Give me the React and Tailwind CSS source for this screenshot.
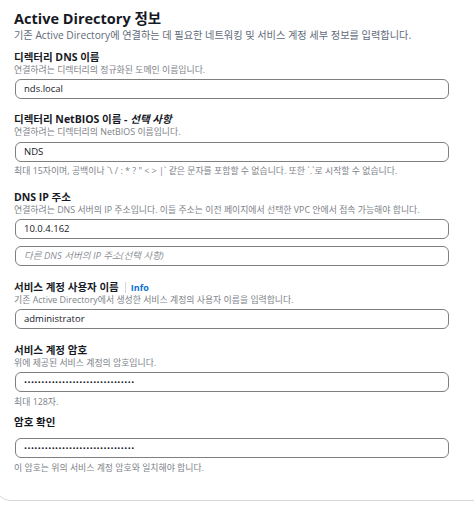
import React from "react";

const font = { fontFamily: '"Open Sans", "Noto Sans CJK KR", sans-serif' };

const Label = ({ children, className = "" }) => (
  <div className={`h-[14px] whitespace-nowrap text-[10.5px] font-bold leading-[14px] text-[#16191f] ${className}`}>
    {children}
  </div>
);

const Desc = ({ children }) => (
  <div className="h-[12px] whitespace-nowrap text-[8.9px] leading-[12px] text-[#7d8288]">{children}</div>
);

const Input = ({ value, placeholder, password, className = "" }) => (
  <div
    className={`ml-[1px] flex h-[20px] w-[434px] items-center rounded-[6px] border-[1.5px] border-[#7f7f7f] bg-white px-[8px] ${className}`}
  >
    {password ? (
      <span className="text-[8px] leading-none tracking-[0.45px] text-[#16191f]">
        {"•".repeat(32)}
      </span>
    ) : value ? (
      <span className="text-[9.5px] leading-none text-[#16191f]">{value}</span>
    ) : (
      <span className="text-[9.5px] italic leading-none text-[#8d9096]">{placeholder}</span>
    )}
  </div>
);

const Hint = ({ children, className = "" }) => (
  <div className={`h-[12px] whitespace-nowrap text-[8.9px] leading-[12px] text-[#7d8288] ${className}`}>
    {children}
  </div>
);

export default function App() {
  return (
    <div className="h-[506px] w-[474px] overflow-hidden bg-white" style={font}>
      <div className="-ml-[4px] -mt-[8px] h-[509px] w-[520px] rounded-[14px] border border-[#d5d8dc] pl-[17px] pt-[17px]">
        <h1 className="h-[18px] whitespace-nowrap text-[14.5px] font-bold leading-[18px] text-[#16191f]">
          Active Directory 정보
        </h1>
        <div className="h-[14px] whitespace-nowrap text-[10.2px] leading-[14px] text-[#5f6b7a]">
          기존 Active Directory에 연결하는 데 필요한 네트워킹 및 서비스 계정 세부 정보를 입력합니다.
        </div>

        <Label className="mt-[8px]">디렉터리 DNS 이름</Label>
        <Desc>연결하려는 디렉터리의 정규화된 도메인 이름입니다.</Desc>
        <Input className="mt-[3px]" value="nds.local" />

        <Label className="mt-[13px]">
          디렉터리 NetBIOS 이름 - <i>선택 사항</i>
        </Label>
        <Desc>연결하려는 디렉터리의 NetBIOS 이름입니다.</Desc>
        <Input className="mt-[4px]" value="NDS" />
        <Hint className="mt-[3px]">
          최대 15자이며, 공백이나 `\ / : * ? " &lt; &gt; |` 같은 문자를 포함할 수 없습니다. 또한 `.`로 시작할 수 없습니다.
        </Hint>

        <Label className="mt-[13px]">DNS IP 주소</Label>
        <Desc>연결하려는 DNS 서버의 IP 주소입니다. 이들 주소는 이전 페이지에서 선택한 VPC 안에서 접속 가능해야 합니다.</Desc>
        <Input className="mt-[3px]" value="10.0.4.162" />
        <Input className="mt-[7px]" placeholder="다른 DNS 서버의 IP 주소(선택 사항)" />

        <div className="mt-[14px] flex h-[14px] items-center">
          <Label>서비스 계정 사용자 이름</Label>
          <span className="ml-[6px] h-[11px] border-l border-[#d5d8dc]" />
          <span className="ml-[5px] text-[9px] font-bold leading-none text-[#0972d3]">Info</span>
        </div>
        <Desc>기존 Active Directory에서 생성한 서비스 계정의 사용자 이름을 입력합니다.</Desc>
        <Input className="mt-[3px]" value="administrator" />

        <Label className="mt-[14px]">서비스 계정 암호</Label>
        <Desc>위에 제공된 서비스 계정의 암호입니다.</Desc>
        <Input className="mt-[3px]" password />
        <Hint className="mt-[4px]">최대 128자.</Hint>

        <Label className="mt-[7px]">암호 확인</Label>
        <Input className="mt-[9px]" password />
        <Hint className="mt-[4px]">이 암호는 위의 서비스 계정 암호와 일치해야 합니다.</Hint>
      </div>
    </div>
  );
}
